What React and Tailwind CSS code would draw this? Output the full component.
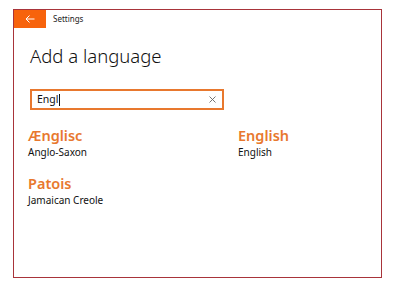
import React from "react";

const langs = [
  [
    { name: "Ænglisc", sub: "Anglo-Saxon" },
    { name: "Patois", sub: "Jamaican Creole" },
  ],
  [{ name: "English", sub: "English" }],
];

export default function App() {
  return (
    <div className="w-[399px] h-[304px] bg-white pt-[9px] pl-[13px]" style={{ fontFamily: "'Noto Sans', sans-serif" }}>
      <div className="w-[369px] h-[269px] border border-[#a8343a] bg-white">
        {/* title bar */}
        <div className="flex items-center h-[18px]">
          <div className="w-[32px] h-[18px] bg-[#f7630c] flex items-center justify-center">
            <svg width="10" height="8" viewBox="0 0 10 8" fill="none" stroke="white" strokeWidth="1">
              <path d="M9.5 4H1M4.5 0.5L1 4l3.5 3.5" />
            </svg>
          </div>
          <span className="ml-[7px] text-[8px] text-[#222]">Settings</span>
        </div>

        <div className="pl-[16px] pr-[16px]">
          <h1 className="mt-[16px] text-[18.5px] leading-[24px] font-light text-[#111]">Add a language</h1>

          <div className="mt-[21px] w-[194px] h-[21px] border-2 border-[#e8782e] flex items-center pl-[5px] pr-[6px]">
            <span className="text-[10.5px] text-[#111]">Engl</span>
            <span className="w-px h-[12px] bg-[#111]"></span>
            <span className="ml-auto text-[#666]">
              <svg width="7" height="7" viewBox="0 0 7 7" stroke="currentColor" strokeWidth="0.9">
                <path d="M0.5 0.5l6 6M6.5 0.5l-6 6" />
              </svg>
            </span>
          </div>

          <div className="mt-[15px] grid grid-cols-[210px_1fr] -ml-[2px]">
            {langs.map((col, i) => (
              <div key={i} className="flex flex-col gap-[14px]">
                {col.map((l) => (
                  <div key={l.name}>
                    <div className="text-[14.5px] leading-[20px] font-semibold text-[#e8782e]">{l.name}</div>
                    <div className="text-[10px] leading-[14px] text-[#111]">{l.sub}</div>
                  </div>
                ))}
              </div>
            ))}
          </div>
        </div>
      </div>
    </div>
  );
}
